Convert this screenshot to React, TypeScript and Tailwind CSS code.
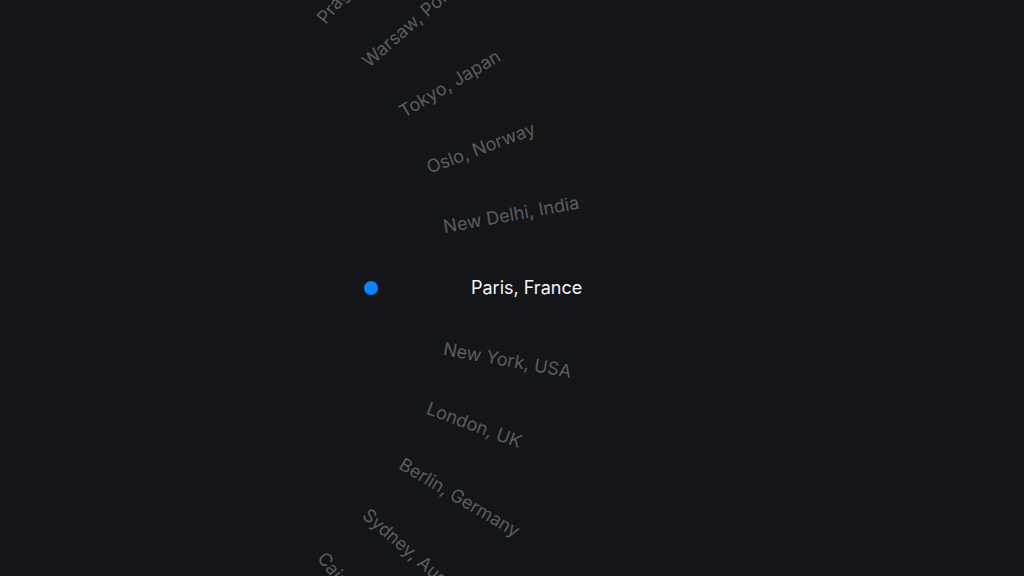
import React from "react";

const cities = [
  "Rome, Italy",
  "Prague, Czechia",
  "Warsaw, Poland",
  "Tokyo, Japan",
  "Oslo, Norway",
  "New Delhi, India",
  "Paris, France",
  "New York, USA",
  "London, UK",
  "Berlin, Germany",
  "Sydney, Australia",
  "Cairo, Egypt",
  "Lima, Peru",
];

const ACTIVE = 6;
const STEP = 10.25;
const RADIUS = 342;

export default function App() {
  return (
    <div
      className="relative w-screen h-screen overflow-hidden bg-[#141518]"
      style={{ fontFamily: "Inter, 'Noto Sans', sans-serif" }}
    >
      <div className="absolute left-[364px] top-[280.5px] w-[14px] h-[14px] rounded-full bg-[#0a84ff]" />
      <div className="absolute left-[107px] top-[287.5px] w-0 h-0">
        {cities.map((c, i) => {
          const k = i - ACTIVE;
          const active = k === 0;
          return (
            <div
              key={c}
              className={
                "absolute left-0 top-[-14px] h-7 leading-7 text-[18px] whitespace-nowrap origin-left " +
                (active ? "text-[#f5f5f7]" : "text-[#5b5c61]")
              }
              style={{
                transform: `rotate(${k * STEP}deg)`,
                paddingLeft: RADIUS + (active ? 22 : 0),
              }}
            >
              {c}
            </div>
          );
        })}
      </div>
    </div>
  );
}
